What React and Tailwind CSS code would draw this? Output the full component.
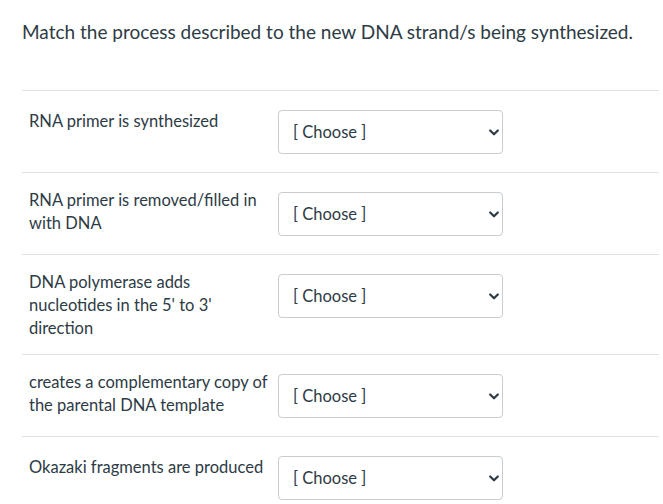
import React from "react";

const rows = [
  { lines: ["RNA primer is synthesized"] },
  { lines: ["RNA primer is removed/filled in", "with DNA"] },
  { lines: ["DNA polymerase adds", "nucleotides in the 5' to 3'", "direction"] },
  { lines: ["creates a complementary copy of", "the parental DNA template"] },
  { lines: ["Okazaki fragments are produced"] },
];

function Select() {
  return (
    <div className="mt-[3px] mb-[4px] ml-[7px] flex h-[44px] w-[225px] shrink-0 items-center justify-between rounded-[4px] border border-[#c7cdd1] bg-white pl-[14px] pr-[3px]">
      <span className="text-[16.5px] leading-[23px] text-[#2d3b45]">[ Choose ]</span>
      <svg width="10" height="7" viewBox="0 0 10 7">
        <path d="M1.2 1.5 L5 5.3 L8.8 1.5" fill="none" stroke="#2d3b45" strokeWidth="2.2" strokeLinecap="round" strokeLinejoin="round" />
      </svg>
    </div>
  );
}

export default function App() {
  return (
    <div className="min-h-[504px] w-[663px] bg-white text-[#2d3b45]" style={{ fontFamily: "Lato, 'Open Sans', sans-serif" }}>
      <div className="whitespace-nowrap px-[22px] pt-[18px] text-[19px] leading-[27px]">
        Match the process described to the new DNA strand/s being synthesized.
      </div>
      <div className="ml-[22px] mr-[4px] mt-[45px] border-t border-[#dfe2e4]">
        {rows.map((r, i) => (
          <div key={i} className="flex items-start border-b border-[#dfe2e4] pl-[7px] pt-[16px] pb-[14px]">
            <div className={"w-[242px] shrink-0 whitespace-nowrap text-[16.5px] leading-[23px] " + (r.lines.length === 1 ? "mt-[3px]" : "mt-0")}>
              {r.lines.map((l, j) => (
                <div key={j}>{l}</div>
              ))}
            </div>
            <Select />
          </div>
        ))}
      </div>
    </div>
  );
}
